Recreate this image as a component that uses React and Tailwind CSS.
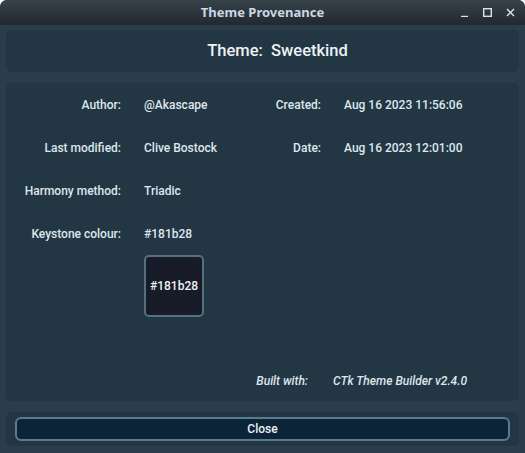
import React from 'react';

const font = { fontFamily: 'Roboto, "Liberation Sans", sans-serif' };

const Row = ({ label, value, label2, value2 }) => (
  <div className="flex h-[24px] items-center text-[12px] font-medium text-[#dfe6ec]">
    <div className="w-[115px] text-right">{label}</div>
    <div className="ml-[23px] w-[116px]">{value}</div>
    <div className="w-[61px] text-right">{label2}</div>
    <div className="ml-[23px]">{value2}</div>
  </div>
);

const App = () => {
  return (
    <div className="w-[525px] h-[453px] bg-white" style={font}>
      <div className="flex h-full flex-col overflow-hidden rounded-t-[7px] bg-[#293d4a]">
        {/* title bar */}
        <div className="relative flex h-[25px] shrink-0 items-center justify-center bg-gradient-to-b from-[#37434a] to-[#22292d]">
          <span className="text-[13px] font-bold text-[#c9d7e4]" style={{ fontFamily: '"Noto Sans", "DejaVu Sans", sans-serif' }}>
            Theme Provenance
          </span>
          <div className="absolute right-[10px] top-0 flex h-full items-center gap-[14px] text-[#dbe4ea]">
            <svg width="9" height="9" viewBox="0 0 9 9"><path d="M1 8.5h7" stroke="currentColor" strokeWidth="1.4" /></svg>
            <svg width="9" height="9" viewBox="0 0 9 9"><rect x="0.7" y="0.7" width="7.6" height="7.6" fill="none" stroke="currentColor" strokeWidth="1.4" /></svg>
            <svg width="9" height="9" viewBox="0 0 9 9"><path d="M1 1l7 7M8 1l-7 7" stroke="currentColor" strokeWidth="1.4" /></svg>
          </div>
        </div>

        <div className="flex flex-1 flex-col px-[6px] pt-[5px] pb-[7px]">
          {/* header */}
          <div className="flex h-[42px] items-center justify-center rounded-[6px] bg-[#223644] pl-[30px] pt-[1px]">
            <span className="text-[16.5px] font-medium text-[#eef2f5] whitespace-pre">Theme:  Sweetkind</span>
          </div>

          {/* details */}
          <div className="mt-[11px] flex h-[318px] flex-col rounded-[6px] bg-[#223644] pt-[10px]">
            <div className="flex flex-col gap-[19px]">
              <Row label="Author:" value="@Akascape" label2="Created:" value2="Aug 16 2023 11:56:06" />
              <Row label="Last modified:" value="Clive Bostock" label2="Date:" value2="Aug 16 2023 12:01:00" />
              <Row label="Harmony method:" value="Triadic" />
              <Row label="Keystone colour:" value="#181b28" />
            </div>
            <div className="ml-[138px] mt-[9px] flex h-[62px] w-[60px] items-center justify-center rounded-[5px] border-2 border-[#56707f] bg-[#181b28] text-[12px] font-medium text-[#eef2f5]">
              #181b28
            </div>
            <div className="mt-[52px] flex h-[24px] items-center text-[12px] font-medium italic text-[#dfe6ec]">
              <div className="w-[302px] text-right">Built with:</div>
              <div className="ml-[25px]">CTk Theme Builder v2.4.0</div>
            </div>
          </div>

          {/* footer */}
          <div className="mt-[11px] flex h-[34px] items-center rounded-[6px] bg-[#223644] px-[9px]">
            <button className="flex h-[24px] w-full items-center justify-center rounded-[6px] border-2 border-[#5b7a8e] bg-[#0b2437] text-[12px] font-medium text-[#eef2f5]">
              Close
            </button>
          </div>
        </div>
      </div>
    </div>
  );
};

export default App;
